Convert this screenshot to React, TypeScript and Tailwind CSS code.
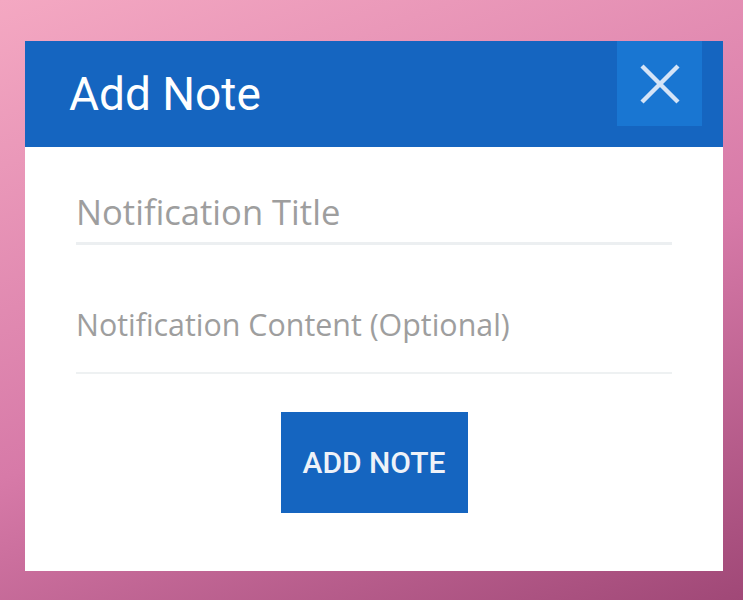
import React, { useState } from 'react';

const App: React.FC = () => {
  const [title, setTitle] = useState('');
  const [content, setContent] = useState('');

  return (
    <div className="w-[743px] h-[600px] overflow-hidden bg-[linear-gradient(160deg,#f4a8c2_0%,#d77aa8_55%,#a04877_100%)] pt-[41px] pl-[25px] pr-[20px]">
      <div className="w-[698px] bg-white flex flex-col">
        {/* Header */}
        <div className="h-[106px] bg-[#1565c0] flex items-start justify-between pl-[44px] pr-[21px]">
          <h1 className="self-center text-[46px] leading-none text-white font-['Roboto',sans-serif] font-normal">
            Add Note
          </h1>
          <button className="w-[85px] h-[85px] bg-[#1976d2] flex items-center justify-center">
            <svg width="40" height="40" viewBox="0 0 40 40" fill="none">
              <path d="M2 2 L38 38 M38 2 L2 38" stroke="#d4e4f7" strokeWidth="4.4" />
            </svg>
          </button>
        </div>

        {/* Body */}
        <div className="flex flex-col px-[51px] pt-[38px] pb-[58px] font-['Open_Sans',sans-serif]">
          <input
            value={title}
            onChange={e => setTitle(e.target.value)}
            placeholder="Notification Title"
            className="h-[60px] w-full pb-[4px] border-b-[3px] border-[#eceff1] text-[34.6px] text-[#616161] placeholder:text-[#9e9e9e] outline-none bg-transparent"
          />
          <textarea
            value={content}
            onChange={e => setContent(e.target.value)}
            placeholder="Notification Content (Optional)"
            className="mt-[45px] h-[84px] w-full pt-[15px] leading-[40px] border-b-2 border-[#eef1f2] text-[30.4px] text-[#616161] placeholder:text-[#9e9e9e] outline-none resize-none bg-transparent overflow-hidden"
          />
          <button className="mt-[38px] self-center w-[187px] h-[101px] bg-[#1565c0] text-[#eef2f8] text-[30px] font-medium font-['Roboto',sans-serif]">
            ADD NOTE
          </button>
        </div>
      </div>
    </div>
  );
};

export default App;
